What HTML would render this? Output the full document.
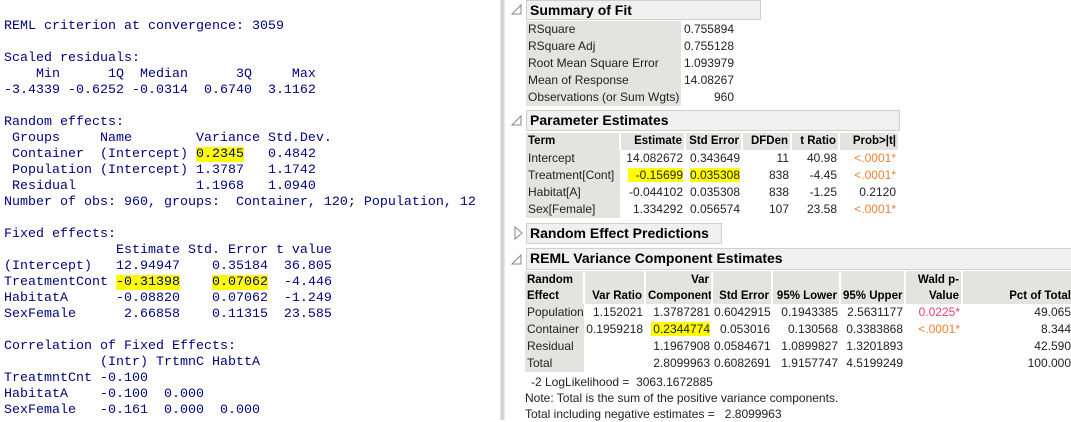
<!DOCTYPE html>
<html><head><style>
*{margin:0;padding:0;box-sizing:border-box}
body{width:1071px;height:420px;background:#fff;position:relative;overflow:hidden}
#L{position:absolute;left:0;top:0;width:500px;height:420px;background:#fff;font-family:"Liberation Mono",monospace;font-size:13.33px;line-height:16px;color:#000080;white-space:pre;padding:19px 0 0 4px}
.hl{background:#ffff00}
#div{position:absolute;left:500px;top:0;width:5px;height:420px;background:linear-gradient(90deg,#e8e8e8,#c8c8c8,#f0f0f0)}
.R{font-family:"Liberation Sans",sans-serif;font-size:12px;color:#222;position:absolute;white-space:nowrap}
.hdr{position:absolute;background:#f0f0f0;border:1px solid #cfcfcf;font-family:"Liberation Sans",sans-serif;font-weight:bold;font-size:14px;color:#000;padding-left:3px;line-height:19px;white-space:nowrap;overflow:hidden}
table{position:absolute;border-collapse:collapse;table-layout:fixed;font-family:"Liberation Sans",sans-serif;font-size:12px;color:#222}
td,th{height:17px;padding:0 2px;white-space:nowrap;line-height:17px;overflow:hidden}
th{background:#e3e3df;font-weight:bold;font-size:11.5px;color:#000;border-right:2px solid #fff}
td{text-align:right}
td.g{background:#e3e3df;text-align:left}
.o{color:#f08030}.p{color:#e8406a}
.y{background:#ffff00}
</style></head><body>
<div id="L">REML criterion at convergence: 3059

Scaled residuals:
    Min      1Q  Median      3Q     Max
-3.4339 -0.6252 -0.0314  0.6740  3.1162

Random effects:
 Groups     Name        Variance Std.Dev.
 Container  (Intercept) <span class="hl">0.2345</span>   0.4842
 Population (Intercept) 1.3787   1.1742
 Residual               1.1968   1.0940
Number of obs: 960, groups:  Container, 120; Population, 12

Fixed effects:
              Estimate Std. Error t value
(Intercept)   12.94947    0.35184  36.805
TreatmentCont <span class="hl">-0.31398</span>    <span class="hl">0.07062</span>  -4.446
HabitatA      -0.08820    0.07062  -1.249
SexFemale      2.66858    0.11315  23.585

Correlation of Fixed Effects:
            (Intr) TrtmnC HabttA
TreatmntCnt -0.100
HabitatA    -0.100  0.000
SexFemale   -0.161  0.000  0.000</div>
<div id="div"></div>

<svg style="position:absolute;left:511px;top:2px" width="12" height="14"><path d="M1 12 L10 12 L10 3 Z" fill="#fff" stroke="#888"/></svg>
<div class="hdr" style="left:526px;top:0;width:235px;height:20px">Summary of Fit</div>
<table style="left:526px;top:21px;width:210px">
<col style="width:155px"><col style="width:55px">
<tr><td class="g">RSquare</td><td>0.755894</td></tr>
<tr><td class="g">RSquare Adj</td><td>0.755128</td></tr>
<tr><td class="g">Root Mean Square Error</td><td>1.093979</td></tr>
<tr><td class="g">Mean of Response</td><td>14.08267</td></tr>
<tr><td class="g">Observations (or Sum Wgts)</td><td>960</td></tr>
</table>

<svg style="position:absolute;left:511px;top:113px" width="12" height="14"><path d="M1 12 L10 12 L10 3 Z" fill="#fff" stroke="#888"/></svg>
<div class="hdr" style="left:526px;top:110px;width:374px;height:21px">Parameter Estimates</div>
<table style="left:526px;top:133px;width:372px">
<col style="width:94px"><col style="width:65px"><col style="width:57px"><col style="width:49px"><col style="width:48px"><col style="width:59px">
<tr><th style="text-align:left">Term</th><th style="text-align:right">Estimate</th><th style="text-align:right">Std Error</th><th style="text-align:right">DFDen</th><th style="text-align:right">t Ratio</th><th style="text-align:right;border-right:0">Prob&gt;|t|</th></tr>
<tr><td class="g">Intercept</td><td>14.082672</td><td>0.343649</td><td>11</td><td>40.98</td><td class="o">&lt;.0001*</td></tr>
<tr><td class="g">Treatment[Cont]</td><td><span class="y" style="padding-left:8px">-0.15699</span></td><td><span class="y">0.035308</span></td><td>838</td><td>-4.45</td><td class="o">&lt;.0001*</td></tr>
<tr><td class="g">Habitat[A]</td><td>-0.044102</td><td>0.035308</td><td>838</td><td>-1.25</td><td>0.2120</td></tr>
<tr><td class="g">Sex[Female]</td><td>1.334292</td><td>0.056574</td><td>107</td><td>23.58</td><td class="o">&lt;.0001*</td></tr>
</table>

<svg style="position:absolute;left:514px;top:226px" width="10" height="14"><path d="M1 1 L8 7 L1 13 Z" fill="#fff" stroke="#888"/></svg>
<div class="hdr" style="left:526px;top:223px;width:196px;height:21px">Random Effect Predictions</div>

<svg style="position:absolute;left:511px;top:252px" width="12" height="14"><path d="M1 12 L10 12 L10 3 Z" fill="#fff" stroke="#888"/></svg>
<div class="hdr" style="left:526px;top:248px;width:550px;height:22px">REML Variance Component Estimates</div>
<table style="left:525px;top:271px;width:546px">
<col style="width:59px"><col style="width:61px"><col style="width:67px"><col style="width:60px"><col style="width:68px"><col style="width:65px"><col style="width:57px"><col style="width:109px">
<tr><th style="text-align:left;vertical-align:bottom;height:33px;line-height:16px">Random<br>Effect</th><th style="text-align:right;vertical-align:bottom;line-height:16px">Var Ratio</th><th style="text-align:right;vertical-align:bottom;line-height:16px">Var<br>Component</th><th style="text-align:right;vertical-align:bottom;line-height:16px">Std Error</th><th style="text-align:right;vertical-align:bottom;line-height:16px">95% Lower</th><th style="text-align:right;vertical-align:bottom;line-height:16px">95% Upper</th><th style="text-align:right;vertical-align:bottom;line-height:16px">Wald p-<br>Value</th><th style="text-align:right;vertical-align:bottom;border-right:0;padding-right:0;line-height:16px">Pct of Total</th></tr>
<tr><td class="g">Population</td><td>1.152021</td><td>1.3787281</td><td>0.6042915</td><td>0.1943385</td><td>2.5631177</td><td class="p">0.0225*</td><td style="padding-right:0">49.065</td></tr>
<tr><td class="g">Container</td><td>0.1959218</td><td><span class="y" style="padding-left:2px">0.2344774</span></td><td>0.053016</td><td>0.130568</td><td>0.3383868</td><td class="o">&lt;.0001*</td><td style="padding-right:0">8.344</td></tr>
<tr><td class="g">Residual</td><td></td><td>1.1967908</td><td>0.0584671</td><td>1.0899827</td><td>1.3201893</td><td></td><td style="padding-right:0">42.590</td></tr>
<tr><td class="g">Total</td><td></td><td>2.8099963</td><td>0.6082691</td><td>1.9157747</td><td>4.5199249</td><td></td><td style="padding-right:0">100.000</td></tr>
</table>
<div class="R" style="left:531px;top:374px;line-height:16px">-2 LogLikelihood = &nbsp;3063.1672885</div>
<div class="R" style="left:525px;top:390px;line-height:16px">Note: Total is the sum of the positive variance components.</div>
<div class="R" style="left:525px;top:406px;line-height:16px">Total including negative estimates = &nbsp;&nbsp;2.8099963</div>
</body></html>
